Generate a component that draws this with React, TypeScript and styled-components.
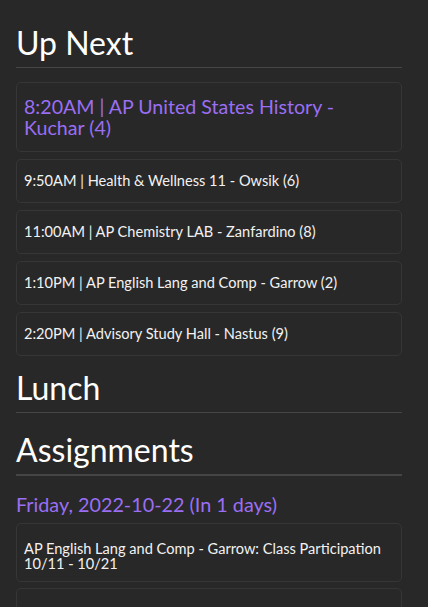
import React from 'react';
import styled, { createGlobalStyle } from 'styled-components';

interface ClassItem {
  time: string;
  name: string;
}

const GlobalStyle = createGlobalStyle`
  html, body {
    margin: 0;
    padding: 0;
    background: #282828;
  }
  body {
    font-family: Lato, "Noto Sans", sans-serif;
    color: #f2f2f2;
  }
`;

const Page = styled.div`
  width: 386px;
  padding: 23px 26px 0 16px;
  display: flex;
  flex-direction: column;
`;

const SectionTitle = styled.h2<{ $thick?: boolean; $top?: number }>`
  margin: ${p => p.$top ?? 0}px 0 0;
  font-size: 32px;
  font-weight: 400;
  line-height: 40px;
  color: #ffffff;
  padding-bottom: 4px;
  border-bottom: ${p => (p.$thick ? '2px' : '1px')} solid #454545;
`;

const CardList = styled.div`
  display: flex;
  flex-direction: column;
  gap: 7px;
  margin: 14px 0 12px;
`;

const Card = styled.div<{ $current?: boolean }>`
  border: 1px solid #363636;
  border-radius: 5px;
  padding: ${p => (p.$current ? '13px 7px' : '12px 7px')};
  font-size: ${p => (p.$current ? '19.6px' : '14.6px')};
  line-height: ${p => (p.$current ? '21px' : '18px')};
  color: ${p => (p.$current ? '#9b6ef3' : '#f2f2f2')};
`;

const DayLabel = styled.div`
  margin-top: 15px;
  font-size: 19.8px;
  line-height: 26px;
  color: #9b6ef3;
`;

const AssignmentCard = styled.div<{ $empty?: boolean }>`
  border: 1px solid #363636;
  border-radius: 5px;
  padding: 17px 7px 10px;
  margin-top: 6px;
  min-height: ${p => (p.$empty ? '40px' : '0')};
  font-size: 14.6px;
  line-height: 15px;
`;

const classes: ClassItem[] = [
  { time: '9:50AM', name: 'Health & Wellness 11 - Owsik (6)' },
  { time: '11:00AM', name: 'AP Chemistry LAB - Zanfardino (8)' },
  { time: '1:10PM', name: 'AP English Lang and Comp - Garrow (2)' },
  { time: '2:20PM', name: 'Advisory Study Hall - Nastus (9)' },
];

const App: React.FC = () => {
  return (
    <>
      <GlobalStyle />
      <Page>
        <SectionTitle>Up Next</SectionTitle>
        <CardList>
          <Card $current>8:20AM | AP United States History - Kuchar (4)</Card>
          {classes.map(c => (
            <Card key={c.time}>
              {c.time} | {c.name}
            </Card>
          ))}
        </CardList>
        <SectionTitle>Lunch</SectionTitle>
        <SectionTitle $thick $top={17}>Assignments</SectionTitle>
        <DayLabel>Friday, 2022-10-22 (In 1 days)</DayLabel>
        <AssignmentCard>
          AP English Lang and Comp - Garrow: Class Participation
          <br />
          10/11 - 10/21
        </AssignmentCard>
        <AssignmentCard $empty />
      </Page>
    </>
  );
};

export default App;
